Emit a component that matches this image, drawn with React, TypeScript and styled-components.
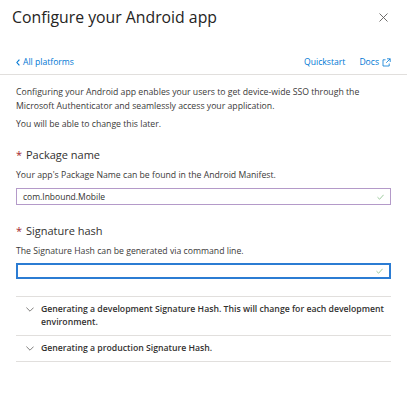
import React from "react";
import styled, { createGlobalStyle } from "styled-components";

const GlobalStyle = createGlobalStyle`
  html, body {
    margin: 0;
    padding: 0;
    background: #ffffff;
  }
  body {
    font-family: "Open Sans", "Noto Sans", sans-serif;
    color: #323130;
  }
`;

const Panel = styled.div`
  width: 407px;
  height: 416px;
  background: #fff;
  overflow: hidden;
`;

const TitleBar = styled.div`
  display: flex;
  align-items: center;
  justify-content: space-between;
  padding: 0 19px 0 12px;
  height: 34px;
`;

const Title = styled.h1`
  margin: 0;
  font-size: 15.8px;
  font-weight: 400;
  color: #252423;
`;

const CloseButton = styled.button`
  border: none;
  background: none;
  padding: 0;
  width: 9px;
  height: 9px;
  display: flex;
  cursor: pointer;
`;

const NavBar = styled.div`
  display: flex;
  align-items: center;
  justify-content: space-between;
  margin-top: 16px;
  padding: 0 16px 0 16px;
  height: 24px;
  border-bottom: 1px solid #e1dfdd;
`;

const NavLinks = styled.div`
  display: flex;
  gap: 14px;
`;

const Link = styled.a`
  display: flex;
  align-items: center;
  gap: 3px;
  font-size: 8.6px;
  color: #0078d4;
  text-decoration: none;
  cursor: pointer;
`;

const Body = styled.div`
  padding: 10px 16px 0 16px;
`;

const Paragraph = styled.p<{ $gap?: number }>`
  margin: 0 0 ${(p) => p.$gap ?? 4}px 0;
  font-size: 8.7px;
  line-height: 14px;
  color: #3b3a39;
`;

const Field = styled.div<{ $top: number }>`
  margin-top: ${(p) => p.$top}px;
`;

const FieldLabel = styled.div`
  font-size: 11px;
  line-height: 16px;
  color: #323130;
`;

const Required = styled.span`
  color: #a4262c;
  margin-right: 1px;
`;

const Hint = styled.div`
  margin-top: 6px;
  font-size: 8.7px;
  line-height: 12px;
  color: #3b3a39;
`;

const InputBox = styled.div<{ $focused?: boolean }>`
  margin-top: ${(p) => (p.$focused ? 6 : 7)}px;
  height: ${(p) => (p.$focused ? 16 : 17)}px;
  box-sizing: border-box;
  display: flex;
  align-items: center;
  padding: 0 6px 0 6px;
  border: ${(p) => (p.$focused ? "2px solid #2b7cd3" : "1px solid #b49ac9")};
`;

const InputValue = styled.span`
  flex: 1;
  font-size: 8.5px;
  color: #323130;
`;

const Accordion = styled.div`
  margin-top: 17px;
  border-top: 1px solid #e1dfdd;
`;

const AccordionRow = styled.div`
  display: flex;
  align-items: flex-start;
  gap: 7px;
  padding: 6px 0 6px 10px;
  border-bottom: 1px solid #e1dfdd;
`;

const Chevron = styled.span`
  display: flex;
  padding-top: 4px;
`;

const AccordionTitle = styled.div`
  font-size: 8.7px;
  line-height: 13px;
  font-weight: 600;
  color: #323130;
`;

const Check = () => (
  <svg width="7" height="6" viewBox="0 0 7 6">
    <path d="M0.5 3.2 L2.6 5.2 L6.6 0.8" fill="none" stroke="#92c492" strokeWidth="0.9" />
  </svg>
);

const ChevronDown = () => (
  <svg width="8" height="5" viewBox="0 0 8 5">
    <path d="M0.4 0.6 L4 4.2 L7.6 0.6" fill="none" stroke="#605e5c" strokeWidth="0.8" />
  </svg>
);

const accordionItems: string[] = [
  "Generating a development Signature Hash. This will change for each development environment.",
  "Generating a production Signature Hash.",
];

export default function App(): JSX.Element {
  return (
    <Panel>
      <GlobalStyle />
      <TitleBar>
        <Title>Configure your Android app</Title>
        <CloseButton aria-label="Close">
          <svg width="9" height="9" viewBox="0 0 9 9">
            <path d="M0.5 0.5 L8.5 8.5 M8.5 0.5 L0.5 8.5" stroke="#605e5c" strokeWidth="0.9" />
          </svg>
        </CloseButton>
      </TitleBar>
      <NavBar>
        <Link>
          <svg width="4" height="7" viewBox="0 0 4 7">
            <path d="M3.4 0.6 L0.9 3.5 L3.4 6.4" fill="none" stroke="#0078d4" strokeWidth="1.1" />
          </svg>
          All platforms
        </Link>
        <NavLinks>
          <Link>Quickstart</Link>
          <Link>
            Docs
            <svg width="9" height="9" viewBox="0 0 9 9">
              <path
                d="M3.5 1.8 H1 V8 H7.2 V5.5 M5 0.8 H8.2 V4 M8.2 0.8 L4.2 4.8"
                fill="none"
                stroke="#0078d4"
                strokeWidth="0.8"
              />
            </svg>
          </Link>
        </NavLinks>
      </NavBar>
      <Body>
        <Paragraph $gap={4}>
          Configuring your Android app enables your users to get device-wide SSO through the
          Microsoft Authenticator and seamlessly access your application.
        </Paragraph>
        <Paragraph $gap={0}>You will be able to change this later.</Paragraph>

        <Field $top={16}>
          <FieldLabel>
            <Required>*</Required> Package name
          </FieldLabel>
          <Hint>Your app's Package Name can be found in the Android Manifest.</Hint>
          <InputBox>
            <InputValue>com.Inbound.Mobile</InputValue>
            <Check />
          </InputBox>
        </Field>

        <Field $top={18}>
          <FieldLabel>
            <Required>*</Required> Signature hash
          </FieldLabel>
          <Hint>The Signature Hash can be generated via command line.</Hint>
          <InputBox $focused>
            <InputValue />
            <Check />
          </InputBox>
        </Field>

        <Accordion>
          {accordionItems.map((item) => (
            <AccordionRow key={item}>
              <Chevron>
                <ChevronDown />
              </Chevron>
              <AccordionTitle>{item}</AccordionTitle>
            </AccordionRow>
          ))}
        </Accordion>
      </Body>
    </Panel>
  );
}
